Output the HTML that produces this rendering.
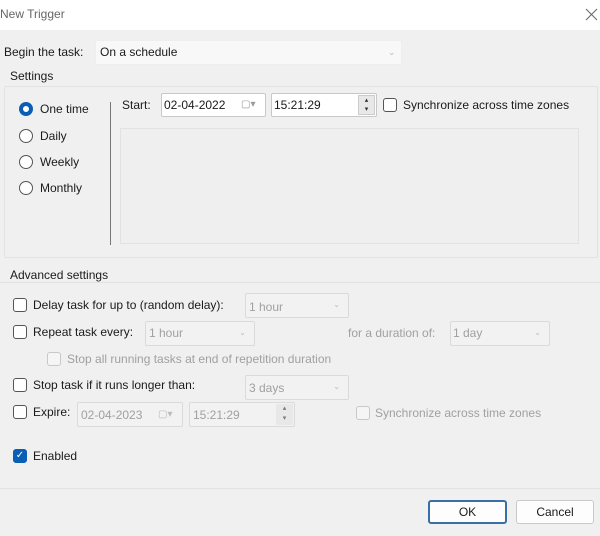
<!DOCTYPE html>
<html><head><style>
*{box-sizing:border-box;margin:0;padding:0}
body{width:600px;height:536px;background:#f0f0f0;font-family:"Liberation Sans",sans-serif;font-size:12px;color:#1a1a1a;position:relative;overflow:hidden}
.a{position:absolute;white-space:nowrap}
.t{position:absolute;white-space:nowrap;line-height:16px}
.g{color:#a0a0a0}
.box{position:absolute;background:#fff;border:1px solid #c8c8c8;border-radius:2px}
.dis{background:#f2f2f2;border-color:#dadada}
.cb{position:absolute;width:14px;height:14px;border:1px solid #555;border-radius:3px;background:#fff}
.cbd{border-color:#c8c8c8;background:#f5f5f5}
.rd{position:absolute;width:14px;height:14px;border:1px solid #555;border-radius:50%;background:#fff}
.btn{position:absolute;height:24px;border:1px solid #c8c8c8;border-radius:3px;background:#fdfdfd;text-align:center;line-height:22px}
.chev{position:absolute;right:8px;top:6px;color:#bbb;font-size:8px}
</style></head><body>
<div class="a" style="left:0;top:0;width:600px;height:30px;background:#fff"></div>
<div class="t" style="left:0;top:6px;color:#666;font-size:12px">New Trigger</div>
<svg class="a" style="left:585px;top:8px" width="13" height="13"><path d="M1 1L12 12M12 1L1 12" stroke="#666" stroke-width="1"/></svg>

<div class="t" style="left:4px;top:44px">Begin the task:</div>
<div class="box" style="left:95px;top:40px;width:307px;height:25px;background:#f8f8f8;border-color:#eee"></div>
<div class="t" style="left:100px;top:44px">On a schedule</div>
<div class="t" style="left:388px;top:44px;color:#bbb;font-size:9px">⌄</div>

<div class="a" style="left:4px;top:86px;width:594px;height:172px;border:1px solid #e2e2e2;border-radius:2px"></div>
<div class="t" style="left:10px;top:68px;background:#f0f0f0;padding-right:2px">Settings</div>

<div class="rd" style="left:19px;top:102px;border:4px solid #0a5fb4"></div>
<div class="t" style="left:40px;top:101px">One time</div>
<div class="rd" style="left:19px;top:129px"></div><div class="t" style="left:40px;top:128px">Daily</div>
<div class="rd" style="left:19px;top:155px"></div><div class="t" style="left:40px;top:154px">Weekly</div>
<div class="rd" style="left:19px;top:181px"></div><div class="t" style="left:40px;top:180px">Monthly</div>

<div class="a" style="left:110px;top:102px;width:1px;height:143px;background:#777"></div>

<div class="t" style="left:122px;top:97px">Start:</div>
<div class="box" style="left:161px;top:93px;width:105px;height:24px"></div>
<div class="t" style="left:164px;top:97px">02-04-2022</div>
<div class="t" style="left:241px;top:97px;color:#999;font-size:10px">▢▾</div>
<div class="box" style="left:271px;top:93px;width:106px;height:24px"></div>
<div class="t" style="left:274px;top:97px">15:21:29</div>
<div class="a" style="left:358px;top:95px;width:17px;height:20px;background:#e8e8e8;border:1px solid #ccc;font-size:7px;line-height:9px;text-align:center;color:#333">▴<br>▾</div>
<div class="cb" style="left:383px;top:98px"></div>
<div class="t" style="left:403px;top:97px">Synchronize across time zones</div>
<div class="a" style="left:120px;top:128px;width:459px;height:116px;border:1px solid #e2e2e2;background:#efefef"></div>

<div class="a" style="left:0;top:282px;width:600px;height:207px;border-top:1px solid #e2e2e2;border-bottom:1px solid #e2e2e2"></div>
<div class="t" style="left:10px;top:267px">Advanced settings</div>

<div class="cb" style="left:13px;top:298px"></div><div class="t" style="left:33px;top:297px">Delay task for up to (random delay):</div>
<div class="box dis" style="left:245px;top:293px;width:104px;height:25px"><span class="chev">⌄</span></div>
<div class="t g" style="left:249px;top:299px">1 hour</div>

<div class="cb" style="left:13px;top:325px"></div><div class="t" style="left:33px;top:324px">Repeat task every:</div>
<div class="box dis" style="left:145px;top:321px;width:110px;height:25px"><span class="chev">⌄</span></div>
<div class="t g" style="left:149px;top:325px">1 hour</div>
<div class="t g" style="left:348px;top:325px">for a duration of:</div>
<div class="box dis" style="left:450px;top:321px;width:100px;height:25px"><span class="chev">⌄</span></div>
<div class="t g" style="left:453px;top:325px">1 day</div>

<div class="cb cbd" style="left:47px;top:352px"></div><div class="t g" style="left:67px;top:351px">Stop all running tasks at end of repetition duration</div>

<div class="cb" style="left:13px;top:378px"></div><div class="t" style="left:33px;top:377px">Stop task if it runs longer than:</div>
<div class="box dis" style="left:245px;top:375px;width:104px;height:25px"><span class="chev">⌄</span></div>
<div class="t g" style="left:249px;top:380px">3 days</div>

<div class="cb" style="left:13px;top:405px"></div><div class="t" style="left:33px;top:404px">Expire:</div>
<div class="box dis" style="left:77px;top:402px;width:106px;height:25px"></div>
<div class="t g" style="left:81px;top:407px">02-04-2023</div>
<div class="t" style="left:158px;top:407px;color:#bbb;font-size:10px">▢▾</div>
<div class="box dis" style="left:189px;top:402px;width:106px;height:25px"></div>
<div class="t g" style="left:193px;top:407px">15:21:29</div>
<div class="a" style="left:276px;top:404px;width:17px;height:21px;background:#e8e8e8;font-size:7px;line-height:10px;text-align:center;color:#777">▴<br>▾</div>
<div class="cb cbd" style="left:356px;top:406px"></div><div class="t g" style="left:375px;top:405px">Synchronize across time zones</div>

<div class="cb" style="left:13px;top:449px;background:#0a5fb4;border-color:#0a5fb4;color:#fff;font-size:10px;line-height:12px;text-align:center">✓</div>
<div class="t" style="left:33px;top:448px">Enabled</div>

<div class="btn" style="left:428px;top:500px;width:79px;border:2px solid #3a6ea5;line-height:20px">OK</div>
<div class="btn" style="left:516px;top:500px;width:78px">Cancel</div>
</body></html>
